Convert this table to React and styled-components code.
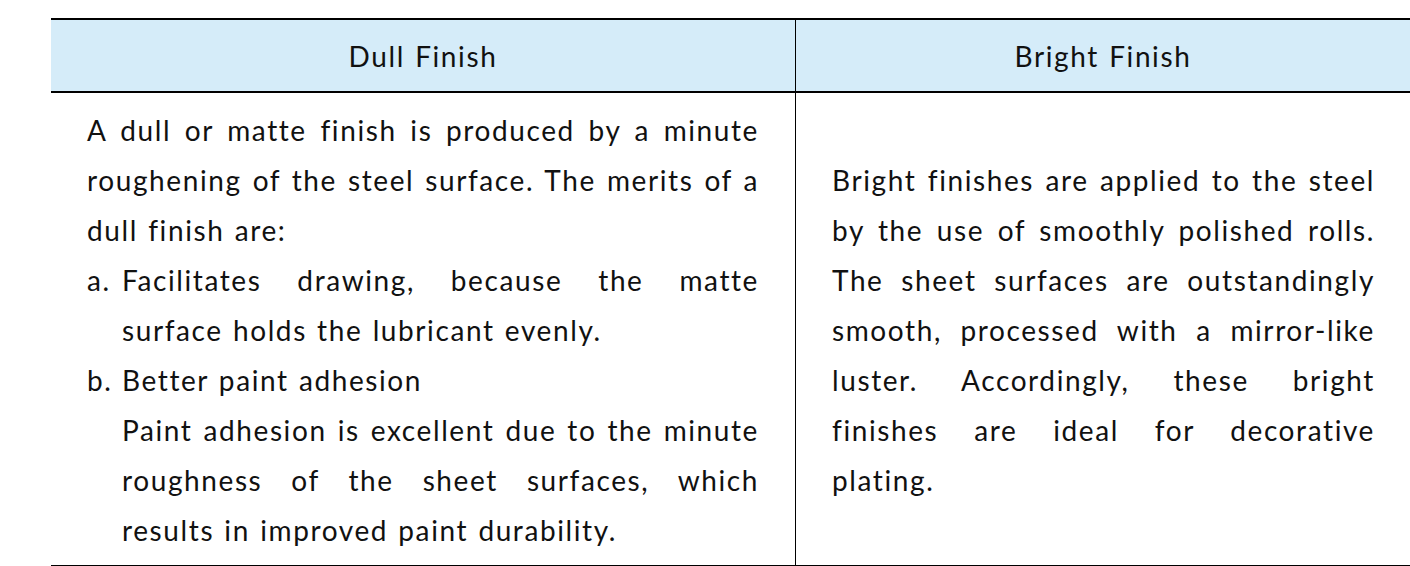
import React from 'react';
import styled, {createGlobalStyle} from "styled-components";

const Global = createGlobalStyle`
  html, body {
    margin: 0;
    padding: 0;
    background: #fff;
  }
  body {
    font-family: 'Lato', 'Noto Sans', sans-serif;
    color: #111;
  }
`;

const Page = styled.div`
  padding: 18px 0 0 51px;
`;

const Table = styled.table`
  width: 1358px;
  border-collapse: collapse;
  table-layout: fixed;
  border-top: 2px solid #000;
  border-bottom: 2px solid #000;
  font-size: 28px;
  line-height: 50px;
  letter-spacing: 1.6px;
  word-spacing: 1.5px;
  font-variant-ligatures: none;
`;

const HeadCell = styled.th`
  width: ${({w}) => w}px;
  height: 71px;
  padding: 0;
  background: #d5ecf9;
  font-weight: 400;
  text-align: center;
  border-bottom: 2px solid #000;
  & + & {
    border-left: 1px solid #000;
  }
`;

const Cell = styled.td`
  padding: 12px 36px 10px 36px;
  vertical-align: middle;
  text-align: justify;
  & + & {
    border-left: 1px solid #000;
    padding-right: 35px;
  }
`;

const Para = styled.p`
  margin: 0;
  text-align: justify;
`;

const Item = styled.div`
  display: flex;
`;

const Marker = styled.span`
  flex: 0 0 35px;
`;

const ItemBody = styled.div`
  flex: 1;
  text-align: justify;
`;

const App = () => (
    <Page>
        <Global/>
        <Table>
            <thead>
            <tr>
                <HeadCell w={744}>Dull Finish</HeadCell>
                <HeadCell w={614}>Bright Finish</HeadCell>
            </tr>
            </thead>
            <tbody>
            <tr>
                <Cell>
                    <Para>
                        A dull or matte finish is produced by a minute roughening of the steel surface. The merits
                        of a dull finish are:
                    </Para>
                    <Item>
                        <Marker>a.</Marker>
                        <ItemBody>Facilitates drawing, because the matte surface holds the lubricant evenly.</ItemBody>
                    </Item>
                    <Item>
                        <Marker>b.</Marker>
                        <ItemBody>
                            Better paint adhesion
                            <Para>
                                Paint adhesion is excellent due to the minute roughness of the sheet surfaces, which
                                results in improved paint durability.
                            </Para>
                        </ItemBody>
                    </Item>
                </Cell>
                <Cell>
                    <Para>
                        Bright finishes are applied to the steel by the use of smoothly polished rolls. The sheet
                        surfaces are outstandingly smooth, processed with a mirror-like luster. Accordingly, these
                        bright finishes are ideal for decorative plating.
                    </Para>
                </Cell>
            </tr>
            </tbody>
        </Table>
    </Page>
);

export default App;
